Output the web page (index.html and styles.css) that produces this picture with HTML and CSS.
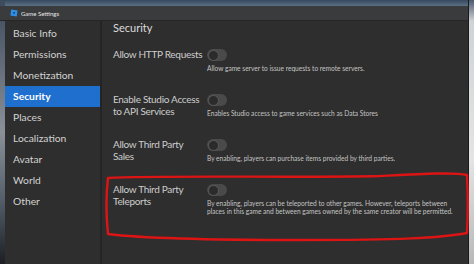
FILE: index.html
```html
<!DOCTYPE html>
<html lang="en">
<head>
    <meta charset="UTF-8">
    <title>Game Settings</title>
    <link rel="stylesheet" href="styles.css">
</head>
<body>
    <div class="backdrop left"></div>
    <div class="window">
        <div class="titleBar">
            <svg class="appIcon" width="8" height="8" viewBox="0 0 8 8">
                <path d="M1.2 0.4 L7.6 1.6 L6.8 7.6 L0.4 6.4 Z" fill="#2f8ee6"/>
                <path d="M3.4 3 L5 3.3 L4.7 4.9 L3.1 4.6 Z" fill="#0e3f7a"/>
            </svg>
            <span class="titleText">Game Settings</span>
        </div>
        <div class="windowBody">
            <div class="sidebar">
                <div class="navItem">Basic Info</div>
                <div class="navItem">Permissions</div>
                <div class="navItem">Monetization</div>
                <div class="navItem active">Security</div>
                <div class="navItem">Places</div>
                <div class="navItem">Localization</div>
                <div class="navItem">Avatar</div>
                <div class="navItem">World</div>
                <div class="navItem">Other</div>
            </div>
            <div class="content">
                <div class="sectionTitle">Security</div>
                <div class="settingRow">
                    <div class="settingLabel">Allow HTTP Requests</div>
                    <div class="settingControl">
                        <div class="toggle"><div class="knob"></div></div>
                        <div class="settingDesc">Allow game server to issue requests to remote servers.</div>
                    </div>
                </div>
                <div class="settingRow">
                    <div class="settingLabel">Enable Studio Access to API Services</div>
                    <div class="settingControl">
                        <div class="toggle"><div class="knob"></div></div>
                        <div class="settingDesc">Enables Studio access to game services such as Data Stores</div>
                    </div>
                </div>
                <div class="settingRow">
                    <div class="settingLabel">Allow Third Party Sales</div>
                    <div class="settingControl">
                        <div class="toggle"><div class="knob"></div></div>
                        <div class="settingDesc">By enabling, players can purchase items provided by third parties.</div>
                    </div>
                </div>
                <div class="settingRow">
                    <div class="settingLabel">Allow Third Party Teleports</div>
                    <div class="settingControl">
                        <div class="toggle"><div class="knob"></div></div>
                        <div class="settingDesc">By enabling, players can be teleported to other games. However, teleports between places in this game and between games owned by the same creator will be permitted.</div>
                    </div>
                </div>
            </div>
        </div>
    </div>
    <div class="backdrop right"></div>

    <!-- hand drawn red circle around the teleports row -->
    <svg class="markup" width="474" height="264" viewBox="0 0 474 264">
        <path d="M108 178 C 160 175 300 178 380 176 C 420 174 455 172 467 175 C 468 195 468 215 467 233 C 440 238 400 240 300 240 C 220 240 140 238 108 234 C 106 215 106 195 108 178 Z"
              fill="none" stroke="#dc1414" stroke-width="2.4" stroke-linejoin="round"/>
    </svg>
</body>
</html>
```

FILE: styles.css
```css
body{
    margin: 0;
    padding: 0;
    width: 474px;
    height: 264px;
    overflow: hidden;
    display: flex;
    background-color: #2d2d2d;
    font-family: "Lato", "Open Sans", sans-serif;
    color: #cfcfcf;
    position: relative;
}
.backdrop{
    height: 100%;
}
.backdrop.left{
    width: 5px;
    background: linear-gradient(180deg, #3c4a5c 0%, #6b7480 30%, #8a9098 50%, #55606c 75%, #1c1f24 100%);
}
.backdrop.right{
    width: 5px;
    background: linear-gradient(180deg, #4a5a70 0%, #cfd2d6 8%, #e4e4e4 60%, #b8b8b8 100%);
    border-left: 1px solid #1a1a1a;
}
.window{
    flex: 1;
    display: flex;
    flex-direction: column;
    background: linear-gradient(180deg, #36485e 0px, #5d6f84 6px, transparent 6px);
}
.titleBar{
    margin-top: 6px;
    margin-left: -5px;
    height: 14px;
    background-color: #3a3b3c;
    display: flex;
    align-items: center;
    gap: 3px;
    padding-left: 10px;
    border-bottom: 1px solid #262626;
}
.appIcon{
    display: block;
}
.titleText{
    font-size: 6px;
    color: #e8e8e8;
}
.windowBody{
    flex: 1;
    display: flex;
}
.sidebar{
    width: 95px;
    background-color: #2e2e2e;
    padding-top: 2px;
    border-right: 2px solid #242424;
}
.navItem{
    height: 21px;
    line-height: 21px;
    padding-left: 8px;
    font-size: 10.3px;
    color: #d2d2d2;
}
.navItem.active{
    background-color: #1f6fcf;
    color: #ffffff;
    font-weight: bold;
}
.content{
    flex: 1;
    background-color: #2e2e2e;
    padding-left: 11px;
}
.sectionTitle{
    font-size: 11px;
    color: #dcdcdc;
    height: 14px;
    line-height: 14px;
    margin-bottom: 14px;
}
.settingRow{
    display: grid;
    grid-template-columns: 94px 1fr;
    height: 45px;
}
.settingLabel{
    max-width: 91px;
    font-size: 10px;
    line-height: 11.5px;
    letter-spacing: -0.3px;
    color: #cdcdcd;
}
.settingControl{
    display: flex;
    flex-direction: column;
    gap: 3px;
}
.toggle{
    width: 20px;
    height: 12px;
    border-radius: 6px;
    background-color: #4a4a4a;
    position: relative;
}
.knob{
    position: absolute;
    left: 1px;
    top: 1px;
    width: 9px;
    height: 9px;
    border-radius: 50%;
    background-color: #2b2b2b;
    border: 0.5px solid #5a5a5a;
}
.settingDesc{
    font-size: 6.6px;
    line-height: 8px;
    color: #c4c4c4;
    max-width: 254px;
}
.markup{
    position: absolute;
    left: 0;
    top: 0;
    pointer-events: none;
}
```
